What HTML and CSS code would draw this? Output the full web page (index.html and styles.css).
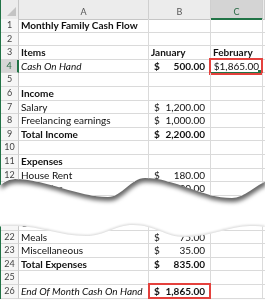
FILE: index.html
```html
<!DOCTYPE html>
<html>
<head>
<meta charset="utf-8">
<link rel="stylesheet" href="styles.css">
</head>
<body>
<div class="tear-top">
  <div class="sheet sheet-top">
    <div class="row head">
      <div class="rh corner"><svg width="18" height="19" viewBox="0 0 18 19"><polygon points="15,7 15,16 6,16" fill="#c4c4c4"/></svg></div>
      <div class="ch">A</div><div class="ch">B</div><div class="ch sel">C</div><div class="ch"></div>
    </div>
    <div class="row"><div class="rh">1</div><div class="c b">Monthly Family Cash Flow</div><div class="c"></div><div class="c"></div><div class="c"></div></div>
    <div class="row"><div class="rh">2</div><div class="c"></div><div class="c"></div><div class="c"></div><div class="c"></div></div>
    <div class="row"><div class="rh">3</div><div class="c b">Items</div><div class="c b">January</div><div class="c b">February</div><div class="c"></div></div>
    <div class="row"><div class="rh rsel">4</div><div class="c i">Cash On Hand</div><div class="c acc b"><span>$</span><span>500.00</span></div><div class="c cur hl"><span>$1,865.00</span><i class="sel-line"></i><i class="handle"></i></div><div class="c"></div></div>
    <div class="row"><div class="rh">5</div><div class="c"></div><div class="c"></div><div class="c"></div><div class="c"></div></div>
    <div class="row"><div class="rh">6</div><div class="c b">Income</div><div class="c"></div><div class="c"></div><div class="c"></div></div>
    <div class="row"><div class="rh">7</div><div class="c">Salary</div><div class="c acc"><span>$</span><span>1,200.00</span></div><div class="c"></div><div class="c"></div></div>
    <div class="row"><div class="rh">8</div><div class="c">Freelancing earnings</div><div class="c acc"><span>$</span><span>1,000.00</span></div><div class="c"></div><div class="c"></div></div>
    <div class="row"><div class="rh">9</div><div class="c b">Total Income</div><div class="c acc b"><span>$</span><span>2,200.00</span></div><div class="c"></div><div class="c"></div></div>
    <div class="row"><div class="rh">10</div><div class="c"></div><div class="c"></div><div class="c"></div><div class="c"></div></div>
    <div class="row"><div class="rh">11</div><div class="c b">Expenses</div><div class="c"></div><div class="c"></div><div class="c"></div></div>
    <div class="row"><div class="rh">12</div><div class="c">House Rent</div><div class="c acc"><span>$</span><span>180.00</span></div><div class="c"></div><div class="c"></div></div>
    <div class="row"><div class="rh">13</div><div class="c">Groceries</div><div class="c acc"><span>$</span><span>200.00</span></div><div class="c"></div><div class="c"></div></div>
    <div class="row"><div class="rh"></div><div class="c"></div><div class="c"></div><div class="c"></div><div class="c"></div></div>
  </div>
</div>
<div class="tear-bottom">
  <div class="sheet sheet-bottom">
    <div class="row"><div class="rh">21</div><div class="c">Utilities</div><div class="c acc"><span>$</span><span>100.00</span></div><div class="c"></div><div class="c"></div></div>
    <div class="row"><div class="rh">22</div><div class="c">Meals</div><div class="c acc"><span>$</span><span>75.00</span></div><div class="c"></div><div class="c"></div></div>
    <div class="row"><div class="rh">23</div><div class="c">Miscellaneous</div><div class="c acc"><span>$</span><span>35.00</span></div><div class="c"></div><div class="c"></div></div>
    <div class="row"><div class="rh">24</div><div class="c b">Total Expenses</div><div class="c acc b"><span>$</span><span>835.00</span></div><div class="c"></div><div class="c"></div></div>
    <div class="row"><div class="rh">25</div><div class="c"></div><div class="c"></div><div class="c"></div><div class="c"></div></div>
    <div class="row"><div class="rh">26</div><div class="c i">End Of Month Cash On Hand</div><div class="c acc b hl2"><span>$</span><span>1,865.00</span></div><div class="c"></div><div class="c"></div></div>
  </div>
</div>
</body>
</html>
```
FILE: styles.css
```css
* { box-sizing: border-box; margin: 0; padding: 0; }
html, body { background: #fff; }
body {
  margin: 0;
  width: 265px;
  height: 300px;
  overflow: hidden;
  font-family: Lato, "Liberation Sans", sans-serif;
  font-size: 10px;
  color: #111;
}
.sheet {
  border-left: 1px solid #217346;
  background: #fff;
}
.tear-top {
  height: 202px;
  filter: drop-shadow(1px 4px 2px rgba(0,0,0,0.6));
}
.sheet-top {
  height: 202px;
  overflow: hidden;
  clip-path: path('M -22 197 C -8 197, 1 179, 15 179 C 45 179, 78 197, 108 197 C 122 197, 131 178, 145 178 C 175 178, 202 198, 232 198 C 246 198, 261 179, 275 179 L 275 0 L -22 0 Z');
}
.tear-bottom {
  margin-top: 15px;
  filter: drop-shadow(0 -1px 1px rgba(0,0,0,0.16));
}
.sheet-bottom {
  clip-path: path('M -10 11 C 0 9, 5 9, 15 9 C 40 9, 60 19, 86 19 C 105 19, 115 8, 133 8 C 155 8, 165 20, 185 20 C 210 20, 230 9, 250 9 C 260 9, 268 10, 275 12 L 275 100 L -10 100 Z');
}
.row {
  display: grid;
  grid-template-columns: 18px 130px 62px 52px 1fr;
  height: 13.6px;
}
.row.head { height: 19px; }
.rh {
  background: #f6f6f6;
  border-right: 1px solid #c6c6c6;
  border-bottom: 1px solid #d8d8d8;
  color: #444;
  font-size: 9px;
  line-height: 12.6px;
  text-align: center;
}
.rh.corner { background: #ececec; border-bottom: 1px solid #c6c6c6; }
.rh.corner svg { display: block; }
.rh.rsel {
  background: #d6d6d6;
  color: #2a6a45;
  border-right: 2px solid #217346;
}
.ch {
  background: #ececec;
  border-right: 1px solid #cfcfcf;
  border-bottom: 1px solid #c6c6c6;
  color: #555;
  font-size: 9px;
  text-align: center;
  padding-top: 6px;
}
.ch.sel {
  background: #d4d4d4;
  color: #2a6a45;
  border-bottom: 2px solid #217346;
}
.c {
  border-right: 1px solid #dadada;
  border-bottom: 1px solid #dadada;
  padding: 0 2px;
  line-height: 12.6px;
  white-space: nowrap;
  position: relative;
}
.b { font-weight: 700; }
.i { font-style: italic; }
.acc {
  display: flex;
  justify-content: space-between;
  padding: 0 5px;
}
.cur { text-align: right; padding-right: 3px; }
.hl::after {
  content: '';
  position: absolute;
  top: -2px; left: -2px; right: -1px; bottom: -3px;
  border: 2px solid #e4413d;
}
.hl2::after {
  content: '';
  position: absolute;
  top: -2px; left: -1px; right: -1px; bottom: -1px;
  border: 2px solid #e4413d;
}
.sel-line {
  position: absolute;
  left: 0; right: 1px; bottom: -1px;
  height: 1px;
  background: #217346;
}
.handle {
  position: absolute;
  right: 1px; bottom: -1px;
  width: 3px; height: 3px;
  background: #217346;
}
```
